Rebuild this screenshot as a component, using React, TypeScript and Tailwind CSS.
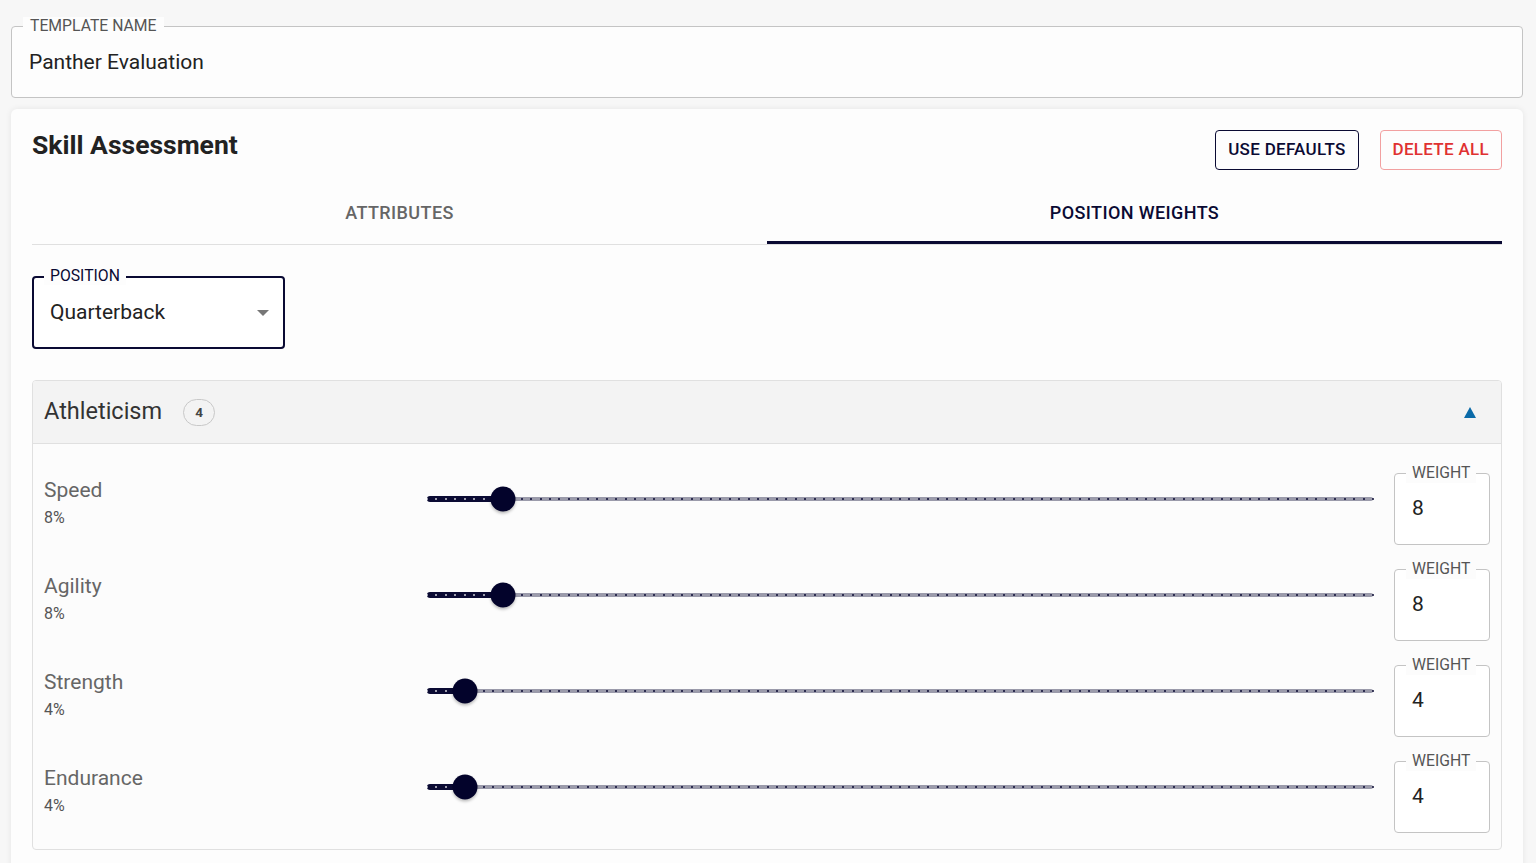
const skills = [
  { name: "Speed", pct: "8%", weight: 8 },
  { name: "Agility", pct: "8%", weight: 8 },
  { name: "Strength", pct: "4%", weight: 4 },
  { name: "Endurance", pct: "4%", weight: 4 },
];

const marks = Array.from({ length: 101 }, (_, i) => i);

function WeightSlider({ value }: { value: number }) {
  return (
    <div className="relative h-[24px] flex-1">
      {/* rail */}
      <div className="absolute left-0 right-0 top-1/2 h-[4px] -translate-y-1/2 rounded-full bg-[#0a0a33]/40" />
      {/* active track */}
      <div
        className="absolute left-0 top-1/2 h-[6px] -translate-y-1/2 rounded-full bg-[#0a0a33]"
        style={{ width: `${value}%` }}
      />
      {marks.map((m) => (
        <span
          key={m}
          className={
            "absolute top-1/2 h-[2px] w-[2px] -translate-x-1/2 -translate-y-1/2 rounded-full " +
            (m < value ? "bg-white/80" : "bg-[#0a0a33]")
          }
          style={{ left: `${m}%` }}
        />
      ))}
      <div
        className="absolute top-1/2 h-[25px] w-[25px] -translate-x-1/2 -translate-y-1/2 rounded-full bg-[#03032b] shadow-[0_2px_3px_rgba(0,0,0,0.25)]"
        style={{ left: `${value}%` }}
      />
    </div>
  );
}

function WeightField({ value }: { value: number }) {
  return (
    <div className="relative h-[72px] w-[96px] shrink-0 rounded-[4px] border border-[#c4c4c4] bg-white">
      <span className="absolute -top-[11px] left-[11px] bg-[#fcfcfc] px-[6px] text-[15.75px] leading-[20px] text-[#555]">
        WEIGHT
      </span>
      <div className="pl-[17px] pt-[20px] text-[21px] leading-[28px] text-[#222]">{value}</div>
    </div>
  );
}

export default function App() {
  return (
    <main
      className="min-h-screen bg-[#f7f7f7] pl-[11px] pr-[13px] pt-[26px] text-[#222]"
      style={{ fontFamily: "Roboto, 'Liberation Sans', sans-serif" }}
    >
      {/* template name */}
      <div className="relative h-[72px] rounded-[4px] border border-[#c4c4c4] bg-[#fdfdfd]">
        <span className="absolute -top-[10px] left-[11px] bg-[#fdfdfd] px-[7px] text-[15.75px] leading-[18px] text-[#555]">
          TEMPLATE NAME
        </span>
        <div className="pl-[17px] pt-[21px] text-[21px] leading-[28px] text-[#222]">Panther Evaluation</div>
      </div>

      <section className="mt-[11px] rounded-t-[6px] bg-[#fdfdfd] px-[21px] pb-[30px] pt-[21px] shadow-[0_0_6px_rgba(0,0,0,0.08)]">
        <div className="flex items-start justify-between">
          <h2 className="text-[26.5px] font-bold leading-[30px] text-[#222]">Skill Assessment</h2>
          <div className="flex gap-[21px]">
            <button className="h-[40px] rounded-[4px] border border-[#0a0a33] px-[12px] text-[17px] font-medium tracking-[0.3px] text-[#0a0a33]">
              USE DEFAULTS
            </button>
            <button className="h-[40px] rounded-[4px] border border-[#f2a0a0] px-[12px] text-[17px] font-medium tracking-[0.3px] text-[#e03131]">
              DELETE ALL
            </button>
          </div>
        </div>

        {/* tabs */}
        <div className="mt-[14px] flex border-b border-[#e0e0e0]">
          <div className="flex h-[60px] flex-1 items-center justify-center pb-[4px] text-[18px] font-medium tracking-[0.4px] text-[#666]">
            ATTRIBUTES
          </div>
          <div className="relative flex h-[60px] flex-1 items-center justify-center pb-[4px] text-[18px] font-medium tracking-[0.4px] text-[#0a0a33]">
            POSITION WEIGHTS
            <span className="absolute bottom-0 left-0 right-0 h-[3px] bg-[#0a0a33]" />
          </div>
        </div>

        {/* position select */}
        <div className="relative mt-[31px] h-[73px] w-[253px] rounded-[4px] border-2 border-[#0a0a33] bg-white">
          <span className="absolute -top-[11px] left-[10px] bg-[#fdfdfd] px-[6px] text-[15.75px] leading-[18px] text-[#0a0a33]">
            POSITION
          </span>
          <div className="flex h-full items-center justify-between pl-[16px] pr-[14px]">
            <span className="text-[21px] text-[#222]">Quarterback</span>
            <svg width="12" height="6" viewBox="0 0 12 6">
              <path d="M0 0 L12 0 L6 6 Z" fill="#777" />
            </svg>
          </div>
        </div>

        {/* accordion */}
        <div className="mt-[31px] overflow-hidden rounded-[4px] border border-[#e0e0e0] bg-[#fcfcfc]">
          <div className="flex h-[63px] items-center justify-between border-b border-[#e0e0e0] bg-[#f3f3f3] pl-[11px] pr-[25px]">
            <div className="flex items-center gap-[21px]">
              <span className="text-[23.5px] text-[#333]">Athleticism</span>
              <span className="flex h-[27px] w-[32px] items-center justify-center rounded-full border border-[#c8c8c8] text-[13.5px] font-bold text-[#444]">
                4
              </span>
            </div>
            <svg width="12" height="11" viewBox="0 0 12 11">
              <path d="M6 0 L12 11 L0 11 Z" fill="#0a6aa8" />
            </svg>
          </div>

          <div className="flex flex-col gap-[24px] pb-[16px] pl-[11px] pr-[11px] pt-[29px]">
            {skills.map((s) => (
              <div key={s.name} className="flex h-[72px] items-center">
                <div className="-mt-[13px] w-[383px] shrink-0">
                  <div className="text-[21px] leading-[30px] text-[#666]">{s.name}</div>
                  <div className="text-[16px] leading-[26px] text-[#555]">{s.pct}</div>
                </div>
                <div className="flex flex-1 items-center pb-[20px]">
                  <WeightSlider value={s.weight} />
                </div>
                <div className="ml-[21px]">
                  <WeightField value={s.weight} />
                </div>
              </div>
            ))}
          </div>
        </div>
      </section>
    </main>
  );
}
